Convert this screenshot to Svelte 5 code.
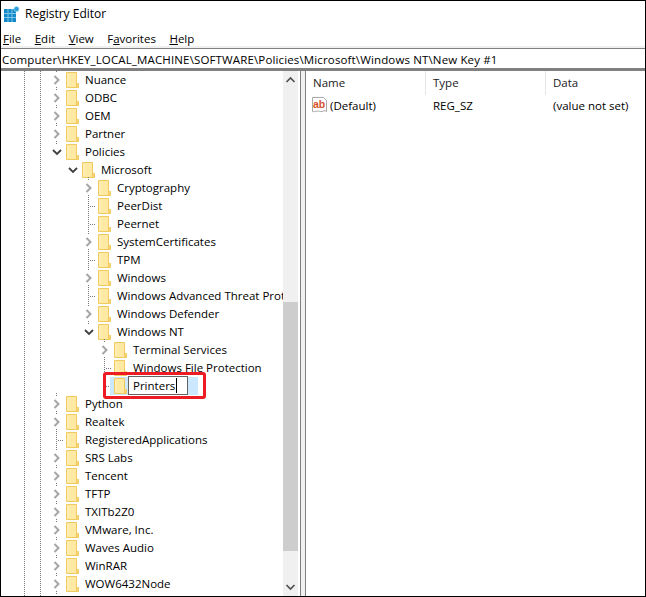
<script lang="ts">
  type Node = { name: string; depth: number; state: 'closed' | 'open' | 'leaf'; line?: boolean };

  const nodes: Node[] = [
    { name: 'Nuance', depth: 0, state: 'closed', line: true },
    { name: 'ODBC', depth: 0, state: 'closed', line: true },
    { name: 'OEM', depth: 0, state: 'closed', line: true },
    { name: 'Partner', depth: 0, state: 'closed', line: true },
    { name: 'Policies', depth: 0, state: 'open' },
    { name: 'Microsoft', depth: 1, state: 'open' },
    { name: 'Cryptography', depth: 2, state: 'closed', line: true },
    { name: 'PeerDist', depth: 2, state: 'leaf', line: true },
    { name: 'Peernet', depth: 2, state: 'leaf', line: true },
    { name: 'SystemCertificates', depth: 2, state: 'closed', line: true },
    { name: 'TPM', depth: 2, state: 'leaf', line: true },
    { name: 'Windows', depth: 2, state: 'closed', line: true },
    { name: 'Windows Advanced Threat Protection', depth: 2, state: 'leaf', line: true },
    { name: 'Windows Defender', depth: 2, state: 'closed', line: true },
    { name: 'Windows NT', depth: 2, state: 'open' },
    { name: 'Terminal Services', depth: 3, state: 'closed', line: true },
    { name: 'Windows File Protection', depth: 3, state: 'leaf', line: true },
    { name: 'Printers', depth: 3, state: 'leaf', line: true },
    { name: 'Python', depth: 0, state: 'closed', line: true },
    { name: 'Realtek', depth: 0, state: 'closed', line: true },
    { name: 'RegisteredApplications', depth: 0, state: 'leaf', line: true },
    { name: 'SRS Labs', depth: 0, state: 'closed', line: true },
    { name: 'Tencent', depth: 0, state: 'closed', line: true },
    { name: 'TFTP', depth: 0, state: 'closed', line: true },
    { name: 'TXITb2Z0', depth: 0, state: 'closed', line: true },
    { name: 'VMware, Inc.', depth: 0, state: 'closed', line: true },
    { name: 'Waves Audio', depth: 0, state: 'closed', line: true },
    { name: 'WinRAR', depth: 0, state: 'closed', line: true },
    { name: 'WOW6432Node', depth: 0, state: 'closed', line: true }
  ];

  const menus = [
    { pre: '', key: 'F', post: 'ile' },
    { pre: '', key: 'E', post: 'dit' },
    { pre: '', key: 'V', post: 'iew' },
    { pre: 'F', key: 'a', post: 'vorites' },
    { pre: '', key: 'H', post: 'elp' }
  ];
</script>

{#snippet folder()}
  <svg class="folder" width="13" height="16" viewBox="0 0 13 16">
    <path d="M.5.5h10v11h2v4H.5z" fill="#ffe9a3" stroke="#f0c95f" />
    <path d="M10.5 11.5v4" stroke="#f0c95f" />
    <path d="M1.5 1.5h1v13h-1z" fill="#fff3c9" />
    <path d="M11 12h1v3h-1z" fill="#f7d777" />
  </svg>
{/snippet}

<div class="window">
  <header class="titlebar">
    <svg class="appicon" width="16" height="17" viewBox="0 0 16 17">
      <path d="M0 3h12v13H0z" fill="#1488c8" />
      <path d="M4 3v13M8 3v13M0 7.5h12M0 11.5h12" stroke="#7cc6ea" stroke-width="1" />
      <circle cx="12.5" cy="3" r="2.6" fill="#2c9fd8" stroke="#bfe4f6" stroke-width=".6" />
    </svg>
    <span>Registry Editor</span>
  </header>

  <nav class="menubar">
    {#each menus as m}
      <span class="menu">{m.pre}<u>{m.key}</u>{m.post}</span>
    {/each}
  </nav>

  <div class="address">Computer\HKEY_LOCAL_MACHINE\SOFTWARE\Policies\Microsoft\Windows NT\New Key #1</div>

  <main class="panes">
    <section class="tree">
      <div class="rows">
        {#each nodes as node}
          <div class="row" class:selected={node.name === 'Printers'} style="padding-left: {47 + node.depth * 16}px">
            <span class="expander" class:line={node.line} class:leaf={node.state === 'leaf'}>
              {#if node.state === 'closed'}
                <svg width="8" height="10" viewBox="0 0 8 10"><path d="M1.500 1 5.500 5 1.500 9" fill="none" stroke="#a6a6a6" stroke-width="2" /></svg>
              {:else if node.state === 'open'}
                <svg width="10" height="8" viewBox="0 0 10 8"><path d="M1 2l4 4 4-4" fill="none" stroke="#404040" stroke-width="1.800" /></svg>
              {/if}
            </span>
            {#if node.name === 'Printers'}
              <span class="selection">
                {@render folder()}
                <span class="editbox">Printers<i class="caret"></i></span>
              </span>
              <span class="callout"></span>
            {:else}
              {@render folder()}
              <span class="label">{node.name}</span>
            {/if}
          </div>
        {/each}
      </div>
      <div class="scrollbar">
        <svg class="arrow" width="15" height="18" viewBox="0 0 15 18"><path d="M3.500 11l4-4 4 4" fill="none" stroke="#505050" stroke-width="1.700" /></svg>
        <div class="track"><div class="thumb"></div></div>
        <svg class="arrow" width="15" height="18" viewBox="0 0 15 18"><path d="M3.500 7l4 4 4-4" fill="none" stroke="#505050" stroke-width="1.700" /></svg>
      </div>
    </section>

    <div class="splitter"></div>

    <section class="values">
      <div class="columns">
        <span class="col name">Name</span>
        <span class="col type">Type</span>
        <span class="col data">Data</span>
      </div>
      <div class="value">
        <span class="cell name">
          <svg class="abicon" width="15" height="16" viewBox="0 0 15 16">
            <path d="M.5.5h11l3 3v11c-2-1.400-3-.6-4.500 0s-3-.8-5-.4-3 .8-4.500.4z" fill="#fff" stroke="#a9a9a9" />
            <text x="1" y="10.500" class="abtext">ab</text>
          </svg>
          (Default)
        </span>
        <span class="cell type">REG_SZ</span>
        <span class="cell data">(value not set)</span>
      </div>
    </section>
  </main>
</div>

<style>
  :global(body) {
    margin: 0;
    background: #fff;
  }

  .window {
    box-sizing: border-box;
    width: 646px;
    height: 597px;
    border: 1px solid #000;
    display: flex;
    flex-direction: column;
    overflow: hidden;
    font-family: 'Open Sans', 'Noto Sans', sans-serif;
    font-size: 11.5px;
    color: #000;
    background: #fff;
  }

  .titlebar {
    height: 26px;
    flex: none;
    display: flex;
    align-items: center;
    gap: 5px;
    padding-left: 3px;
    font-size: 12px;
  }

  .titlebar span {
    margin-top: -2px;
  }

  .appicon {
    flex: none;
    margin-top: 1px;
  }

  .menubar {
    box-sizing: border-box;
    height: 21px;
    flex: none;
    display: flex;
    align-items: center;
    gap: 13.5px;
    padding: 3px 0 0 2px;
    border-bottom: 2px solid #f0f0f0;
  }

  .address {
    height: 19px;
    flex: none;
    line-height: 21px;
    padding-left: 1px;
    letter-spacing: 0.14px;
    border-top: 1px solid #808080;
    border-bottom: 3px solid #808080;
    white-space: nowrap;
    overflow: hidden;
  }

  .panes {
    flex: 1;
    min-height: 0;
    display: flex;
  }

  .tree {
    width: 297px;
    flex: none;
    display: flex;
  }

  .rows {
    flex: 1;
    min-width: 0;
    overflow: hidden;
    background-image:
      repeating-linear-gradient(#777 0 1px, transparent 1px 2px),
      repeating-linear-gradient(#777 0 1px, transparent 1px 2px);
    background-size: 1px 100%;
    background-position: 23px 0, 39px 0;
    background-repeat: no-repeat;
  }

  .row {
    position: relative;
    height: 18px;
    display: flex;
    align-items: center;
    white-space: nowrap;
  }

  .expander {
    position: relative;
    flex: none;
    width: 16px;
    height: 18px;
    margin-right: 2px;
    display: flex;
    align-items: center;
    justify-content: center;
  }

  /* tree connector: chevrons only leave a short stub above and below */
  .expander.line::before {
    content: '';
    position: absolute;
    left: 8px;
    top: -2px;
    height: 22px;
    width: 1px;
    background: repeating-linear-gradient(#777 0 1px, transparent 1px 2px);
    -webkit-mask: linear-gradient(#000 0 4px, transparent 4px 18px, #000 18px);
    mask: linear-gradient(#000 0 4px, transparent 4px 18px, #000 18px);
  }

  .expander.line.leaf::before {
    -webkit-mask: none;
    mask: none;
  }

  .expander.leaf::after {
    content: '';
    position: absolute;
    left: 10px;
    top: 9px;
    width: 6px;
    height: 1px;
    background: repeating-linear-gradient(90deg, #777 0 1px, transparent 1px 2px);
  }

  .expander svg {
    margin-left: 1px;
    background: #fff;
  }

  .folder {
    flex: none;
    margin-right: 6px;
  }

  .label {
    line-height: 18px;
  }

  .selection {
    position: relative;
    z-index: 1;
    display: flex;
    align-items: center;
    height: 18px;
    width: 84px;
    margin-left: -4px;
    padding-left: 4px;
    background: #cce8ff;
  }

  .selection .folder {
    margin-right: 1px;
  }

  .editbox {
    box-sizing: border-box;
    display: flex;
    align-items: center;
    width: 60px;
    height: 19px;
    padding-left: 4px;
    margin-top: -1px;
    background: #fff;
    border: 1px solid #646464;
  }

  .caret {
    width: 1px;
    height: 15px;
    background: #000;
    margin-left: 1px;
  }

  .callout {
    position: absolute;
    z-index: 2;
    left: 102px;
    top: -5px;
    width: 103px;
    height: 27px;
    box-sizing: border-box;
    border: 3px solid #ed1c24;
    border-radius: 3px;
  }

  .scrollbar {
    width: 15px;
    flex: none;
    display: flex;
    flex-direction: column;
    background: #f0f0f0;
  }

  .arrow {
    flex: none;
  }

  .track {
    flex: 1;
  }

  .thumb {
    height: 249px;
    margin-top: 213px;
    background: #cdcdcd;
  }

  .splitter {
    box-sizing: border-box;
    flex: none;
    width: 6px;
    margin-left: 2px;
    background: #f0f0f0;
    border-left: 1px solid #808080;
    border-right: 1px solid #808080;
  }

  .values {
    flex: 1;
    min-width: 0;
  }

  .columns {
    height: 24px;
    display: flex;
    align-items: center;
  }

  .col {
    box-sizing: border-box;
    height: 24px;
    line-height: 24px;
    padding-left: 7px;
    border-right: 1px solid #e5e5e5;
    color: #1a1a1a;
  }

  .col.data {
    border-right: none;
  }

  .col.name {
    width: 120px;
  }

  .col.type {
    width: 120px;
  }

  .value {
    height: 18px;
    margin-top: 1px;
    display: flex;
    align-items: center;
    white-space: nowrap;
  }

  .cell {
    padding-left: 7px;
    box-sizing: border-box;
  }

  .cell.name {
    width: 120px;
    padding-left: 6px;
    display: flex;
    align-items: center;
    gap: 3px;
  }

  .cell.type {
    width: 120px;
  }

  .abtext {
    font-family: 'Liberation Sans', sans-serif;
    font-size: 10.5px;
    font-weight: 700;
    fill: #d5512b;
  }
</style>
